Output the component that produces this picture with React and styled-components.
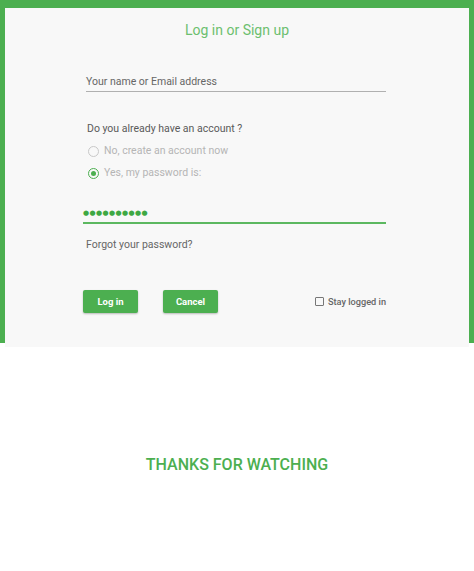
import React from "react";
import styled, { createGlobalStyle } from "styled-components";

const Global = createGlobalStyle`
  html, body { margin: 0; padding: 0; background: #fff; }
  body { font-family: Roboto, "Noto Sans", sans-serif; }
`;

const Frame = styled.div`
  background: #4caf50;
  padding: 8px 5px 0 5px;
  height: 335px;
`;

const Panel = styled.div`
  background: #f8f8f8;
  height: 339px;
  display: flex;
  flex-direction: column;
  align-items: center;
`;

const Title = styled.h1`
  margin: 13px 0 0 0;
  font-size: 14px;
  font-weight: 400;
  color: #6cbf6f;
  text-align: center;
  line-height: 18px;
`;

const Form = styled.div`
  width: 303px;
  margin-left: -5px;
  display: flex;
  flex-direction: column;
`;

const Field = styled.div`
  border-bottom: ${(p) => (p.$active ? "2px solid #5cb860" : "1.5px solid #b0b0b0")};
  padding: 0 0 2px 0;
  margin-top: ${(p) => p.$mt}px;
  margin-left: ${(p) => (p.$active ? 0 : 3)}px;
  font-size: 10.5px;
  color: #666;
  line-height: 14px;
`;

const Dots = styled.span`
  display: inline-block;
  color: #3ea843;
  font-family: "DejaVu Sans", sans-serif;
  font-size: 7px;
  line-height: 14px;
  letter-spacing: 0.4px;
`;

const Question = styled.div`
  margin: 30px 0 0 4px;
  font-size: 10.5px;
  color: #5a5a5a;
  line-height: 14px;
`;

const RadioRow = styled.label`
  display: flex;
  align-items: center;
  gap: 5px;
  margin: ${(p) => p.$mt}px 0 0 5px;
  font-size: 10.5px;
  color: #b5b5b5;
  line-height: 14px;
`;

const RadioCircle = styled.span`
  width: 9px;
  height: 9px;
  border-radius: 50%;
  border: 1px solid ${(p) => (p.$checked ? "#4caf50" : "#c8c8c8")};
  display: flex;
  align-items: center;
  justify-content: center;
  &::after {
    content: "";
    width: 5px;
    height: 5px;
    border-radius: 50%;
    background: ${(p) => (p.$checked ? "#4caf50" : "transparent")};
  }
`;

const Forgot = styled.div`
  margin: 14px 0 0 3px;
  font-size: 10.5px;
  color: #666;
  line-height: 14px;
`;

const Actions = styled.div`
  margin-top: 38px;
  display: flex;
  align-items: center;
  gap: 25px;
`;

const Button = styled.button`
  width: 55px;
  height: 23px;
  border: none;
  border-radius: 2px;
  background: #4caf50;
  color: #fff;
  font-family: Roboto, sans-serif;
  font-weight: 700;
  font-size: 9.5px;
  box-shadow: 0 1px 2px rgba(0, 0, 0, 0.25);
  padding: 0;
`;

const Stay = styled.label`
  margin-left: auto;
  display: flex;
  align-items: center;
  gap: 4px;
  font-size: 9.2px;
  font-weight: 500;
  color: #666;
`;

const Box = styled.span`
  width: 7px;
  height: 7px;
  border: 1.3px solid #777;
  border-radius: 1px;
`;

const Thanks = styled.div`
  margin-top: 112px;
  text-align: center;
  font-size: 16px;
  font-weight: 500;
  color: #4caf50;
`;

export default function App() {
  return (
    <>
      <Global />
      <Frame>
        <Panel>
          <Title>Log in or Sign up</Title>
          <Form>
            <Field $mt={36}>Your name or Email address</Field>
            <Question>Do you already have an account ?</Question>
            <RadioRow $mt={8}>
              <RadioCircle />
              No, create an account now
            </RadioRow>
            <RadioRow $mt={8}>
              <RadioCircle $checked />
              Yes, my password is:
            </RadioRow>
            <Field $active $mt={25}>
              <Dots>●●●●●●●●●●</Dots>
            </Field>
            <Forgot>Forgot your password?</Forgot>
            <Actions>
              <Button>Log in</Button>
              <Button>Cancel</Button>
              <Stay>
                <Box />
                Stay logged in
              </Stay>
            </Actions>
          </Form>
        </Panel>
      </Frame>
      <Thanks>THANKS FOR WATCHING</Thanks>
    </>
  );
}
